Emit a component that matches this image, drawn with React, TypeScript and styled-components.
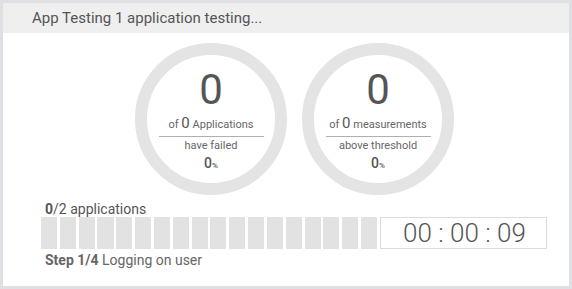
import React from "react";
import styled, { createGlobalStyle } from "styled-components";

const GlobalStyle = createGlobalStyle`
  html, body {
    margin: 0;
    padding: 0;
    background: #dfe0e4;
  }
  body {
    font-family: Roboto, "Liberation Sans", Arial, sans-serif;
  }
`;

const Page = styled.div`
  width: 572px;
  height: 289px;
  padding: 3px;
  box-sizing: border-box;
`;

const Card = styled.div`
  width: 566px;
  height: 283px;
  background: #ffffff;
  display: flex;
  flex-direction: column;
`;

const Header = styled.div`
  height: 30px;
  background: #efefef;
  display: flex;
  align-items: center;
  padding-left: 29px;
  font-size: 15px;
  color: #555555;
`;

const Body = styled.div`
  padding: 10px 0 0 38px;
  display: flex;
  flex-direction: column;
`;

const Gauges = styled.div`
  display: flex;
  gap: 15px;
  padding-left: 94px;
`;

const Ring = styled.div`
  width: 152px;
  height: 152px;
  box-sizing: border-box;
  border: 12px solid #e4e4e4;
  border-radius: 50%;
  display: flex;
  flex-direction: column;
  align-items: center;
  padding-top: 14px;
  color: #555555;
`;

const Count = styled.div`
  font-size: 42px;
  line-height: 42px;
  color: #555555;
`;

const OfLine = styled.div`
  margin-top: 4px;
  width: 105px;
  padding-bottom: 3px;
  border-bottom: 1px solid #b0b0b0;
  text-align: center;
  font-size: 11px;
  line-height: 16px;
  color: #666666;
  white-space: nowrap;

  b {
    font-weight: 400;
    font-size: 15px;
    color: #555555;
  }
`;

const Caption = styled.div`
  margin-top: 3px;
  font-size: 11px;
  line-height: 12px;
  color: #666666;
`;

const Percent = styled.div`
  margin-top: 4px;
  font-size: 14px;
  line-height: 14px;
  font-weight: 500;
  color: #555555;

  small {
    font-size: 8px;
  }
`;

const ProgressLabel = styled.div`
  margin-top: 6px;
  padding-left: 4px;
  font-size: 14px;
  line-height: 16px;
  color: #555555;

  b {
    font-weight: 700;
  }
`;

const ProgressRow = styled.div`
  display: flex;
  align-items: stretch;
  gap: 3px;
  height: 32px;
`;

const Segments = styled.div`
  display: flex;
  gap: 2.8px;
  width: 336px;
`;

const Segment = styled.div<{ $done: boolean }>`
  flex: 1;
  background: ${(p) => (p.$done ? "#7cb342" : "#e2e2e2")};
`;

const Timer = styled.div`
  width: 167px;
  box-sizing: border-box;
  border: 1px solid #dcdcdc;
  display: flex;
  align-items: center;
  justify-content: center;
  font-family: Roboto, "Liberation Sans", sans-serif;
  font-weight: 300;
  font-size: 26px;
  color: #555555;
  white-space: pre;
  padding-left: 2px;
`;

const Step = styled.div`
  margin-top: 3px;
  padding-left: 4px;
  font-size: 14px;
  line-height: 16px;
  color: #666666;

  b {
    font-weight: 700;
  }
`;

const SEGMENTS = 18;

export default function App() {
  return (
    <Page>
      <GlobalStyle />
      <Card>
        <Header>App Testing 1 application testing...</Header>
        <Body>
          <Gauges>
            <Ring>
              <Count>0</Count>
              <OfLine>
                of <b>0</b> Applications
              </OfLine>
              <Caption>have failed</Caption>
              <Percent>
                0<small>%</small>
              </Percent>
            </Ring>
            <Ring>
              <Count>0</Count>
              <OfLine>
                of <b>0</b> measurements
              </OfLine>
              <Caption>above threshold</Caption>
              <Percent>
                0<small>%</small>
              </Percent>
            </Ring>
          </Gauges>
          <ProgressLabel>
            <b>0</b>/2 applications
          </ProgressLabel>
          <ProgressRow>
            <Segments>
              {Array.from({ length: SEGMENTS }).map((_, i) => (
                <Segment key={i} $done={false} />
              ))}
            </Segments>
            <Timer>00 : 00 : 09</Timer>
          </ProgressRow>
          <Step>
            <b>Step 1/4</b> Logging on user
          </Step>
        </Body>
      </Card>
    </Page>
  );
}
